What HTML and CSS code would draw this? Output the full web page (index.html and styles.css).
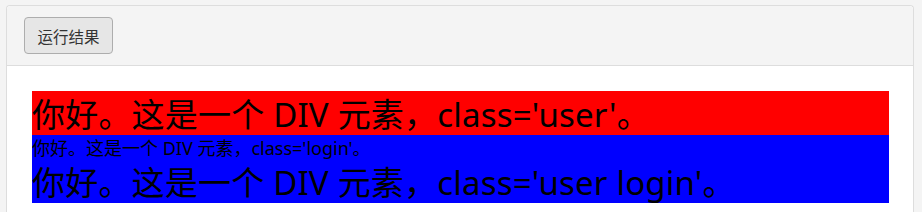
FILE: index.html
```html
<!DOCTYPE html>
<html lang="zh-CN">
<head>
    <meta charset="UTF-8">
    <title>运行结果</title>
    <link rel="stylesheet" href="styles.css">
</head>
<body>

<div class="panel">
    <div class="panel-head">
        <button type="button" class="btn">运行结果</button>
    </div>
    <div class="panel-body">
        <div class="user">你好。这是一个 DIV 元素<span class="comma">，</span>class='user'。</div>
        <div class="login">你好。这是一个 DIV 元素<span class="comma">，</span>class='login'。</div>
        <div class="user login">你好。这是一个 DIV 元素<span class="comma">，</span>class='user login'。</div>
    </div>
</div>

</body>
</html>
```

FILE: styles.css
```css
body {
    margin: 5px 8px 0 6px;
    background-color: #f4f4f4;
    font-family: "Noto Sans", "Noto Sans CJK SC", sans-serif;
    color: #000;
}
.panel {
    border: 1px solid #dddddd;
    border-radius: 4px 4px 0 0;
    border-bottom: none;
    background: #fff;
}
.panel-head {
    background-color: #f4f4f4;
    border-bottom: 1px solid #dddddd;
    padding: 11px 17px 11px;
    border-radius: 4px 4px 0 0;
}
.btn {
    font-family: "Noto Sans CJK SC", sans-serif;
    font-size: 15.5px;
    color: #333;
    background-color: #e6e6e6;
    border: 1px solid #adadad;
    border-radius: 4px;
    height: 37px;
    width: 89px;
    padding: 0;
    cursor: pointer;
}
.panel-body {
    padding: 25px 24px 9px 25px;
}
.user {
    background-color: red;
    font-size: 33px;
    line-height: 44px;
    height: 44px;
    white-space: nowrap;
    letter-spacing: 0.2px;
}
.login {
    background-color: blue;
    font-size: 18px;
    line-height: 24px;
    height: 24px;
    letter-spacing: 0;
}
.user.login {
    font-size: 33px;
    line-height: 44px;
    height: 44px;
    letter-spacing: 0.2px;
}
/* full-width comma sits in the middle of its cell */
.comma {
    font-family: "Noto Sans CJK TC", sans-serif;
}
```
